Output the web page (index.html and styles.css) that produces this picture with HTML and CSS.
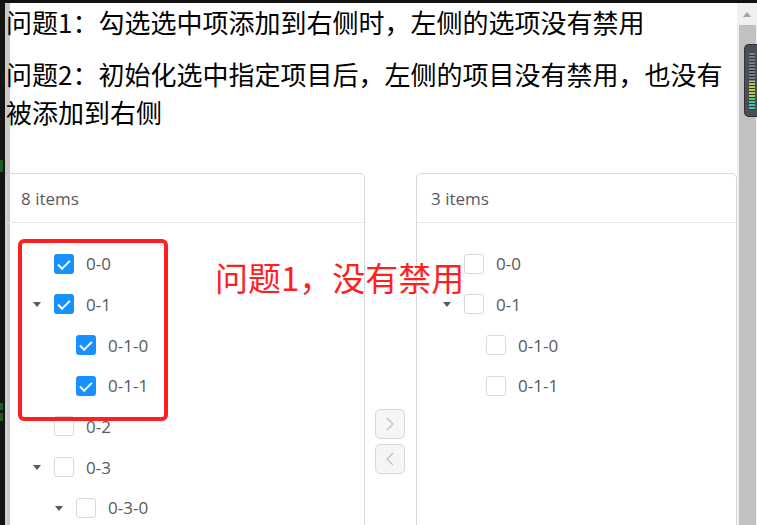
FILE: index.html
```html
<!DOCTYPE html>
<html lang="zh-CN">
<head>
  <meta charset="UTF-8" />
  <title>Transfer 问题</title>
  <link rel="stylesheet" href="styles.css">
</head>
<body>
  <div class="topbar"></div>
  <div class="window">
    <div class="edge"></div>

    <div class="page">
      <p class="question">问题1：勾选选中项添加到右侧时，左侧的选项没有禁用</p>
      <p class="question">问题2：初始化选中指定项目后，左侧的项目没有禁用，也没有被添加到右侧</p>

      <div class="transfer">
        <div class="list list-left">
          <div class="list-header">8 items</div>
          <div class="list-body">
            <div class="node"><span class="switcher"></span><span class="checkbox checked"></span><span class="title">0-0</span></div>
            <div class="node"><span class="switcher"><i class="caret"></i></span><span class="checkbox checked"></span><span class="title">0-1</span></div>
            <div class="node lvl-1"><span class="switcher"></span><span class="checkbox checked"></span><span class="title">0-1-0</span></div>
            <div class="node lvl-1"><span class="switcher"></span><span class="checkbox checked"></span><span class="title">0-1-1</span></div>
            <div class="node"><span class="switcher"></span><span class="checkbox"></span><span class="title">0-2</span></div>
            <div class="node"><span class="switcher"><i class="caret"></i></span><span class="checkbox"></span><span class="title">0-3</span></div>
            <div class="node lvl-1"><span class="switcher"><i class="caret"></i></span><span class="checkbox"></span><span class="title">0-3-0</span></div>
          </div>
        </div>

        <div class="operation">
          <button class="op-btn" disabled>
            <svg width="8" height="14" viewBox="0 0 8 14"><path d="M1 1 L7 7 L1 13" /></svg>
          </button>
          <button class="op-btn" disabled>
            <svg width="8" height="14" viewBox="0 0 8 14"><path d="M7 1 L1 7 L7 13" /></svg>
          </button>
        </div>

        <div class="list list-right">
          <div class="list-header">3 items</div>
          <div class="list-body">
            <div class="node"><span class="switcher"></span><span class="checkbox"></span><span class="title">0-0</span></div>
            <div class="node"><span class="switcher"><i class="caret"></i></span><span class="checkbox"></span><span class="title">0-1</span></div>
            <div class="node lvl-1"><span class="switcher"></span><span class="checkbox"></span><span class="title">0-1-0</span></div>
            <div class="node lvl-1"><span class="switcher"></span><span class="checkbox"></span><span class="title">0-1-1</span></div>
          </div>
        </div>
      </div>

      <!-- annotation drawn over the screenshot -->
      <div class="mark-box"></div>
      <div class="mark-text">问题1，没有禁用</div>
    </div>

    <div class="scrollbar">
      <div class="scroll-arrow"><i></i></div>
      <div class="scroll-track">
        <div class="meter"><div class="meter-ticks"></div></div>
      </div>
    </div>
  </div>
</body>
</html>
```

FILE: styles.css
```css
body {
  margin: 0;
  height: 100vh;
  overflow: hidden;
  display: flex;
  flex-direction: column;
  background: #111;
  font-family: "Noto Sans CJK SC", sans-serif;
}
.topbar {
  height: 3px;
  flex-shrink: 0;
  background: #111;
}
.window {
  flex: 1;
  display: flex;
  min-height: 0;
}
.edge {
  width: 5px;
  flex-shrink: 0;
  background:
    linear-gradient(to bottom,
      transparent 0 157px, #1d5a1d 157px 169px,
      transparent 169px 400px, #1d5a1d 400px 407px,
      transparent 407px 410px, #1d5a1d 410px 418px,
      transparent 418px) 0 0 / 3px 100% no-repeat,
    #141414;
}
.page {
  position: relative;
  flex: 1;
  min-width: 0;
  padding-left: 1px;
  background: linear-gradient(to right, #c9c9c9 0 5px, #fff 5px);
}
.question {
  margin: 0;
  font-size: 26px;
  line-height: 38px;
  color: #000;
}
.question + .question {
  margin-top: 14px;
}

/* transfer */
.transfer {
  display: flex;
  align-items: center;
  margin-top: 42px;
  font-family: "Open Sans", "Noto Sans CJK SC", sans-serif;
  font-size: 17px;
  color: #595959;
}
.list {
  box-sizing: border-box;
  height: 536px;
  flex-shrink: 0;
  border: 1px solid #d9d9d9;
  border-radius: 5px;
  display: flex;
  flex-direction: column;
}
.list-left {
  width: 359px;
}
.list-right {
  width: 321px;
}
.list-header {
  box-sizing: border-box;
  height: 49px;
  flex-shrink: 0;
  padding: 0 14px;
  display: flex;
  align-items: center;
  border-bottom: 1px solid #e8e8e8;
}
.list-body {
  padding-top: 20.5px;
}
.node {
  height: 40.67px;
  display: flex;
  align-items: center;
  padding-left: 21px;
}
.node.lvl-1 {
  padding-left: 43px;
}
.switcher {
  width: 17px;
  display: flex;
  justify-content: center;
}
.caret {
  width: 0;
  height: 0;
  border-left: 4.5px solid transparent;
  border-right: 4.5px solid transparent;
  border-top: 5px solid #595959;
  margin-top: 1px;
}
.checkbox {
  position: relative;
  box-sizing: border-box;
  width: 20px;
  height: 20px;
  margin-left: 9px;
  border: 1px solid #d9d9d9;
  border-radius: 2.5px;
  background: #fff;
}
.checkbox.checked {
  background: #1890ff;
  border-color: #1890ff;
}
.checkbox.checked::after {
  content: "";
  position: absolute;
  top: 50%;
  left: 22%;
  box-sizing: border-box;
  width: 7px;
  height: 11.5px;
  border: 2.5px solid #fff;
  border-top: 0;
  border-left: 0;
  transform: rotate(45deg) translate(-50%, -50%);
}
.title {
  margin-left: 12px;
}

.operation {
  display: flex;
  flex-direction: column;
  gap: 5px;
  margin: 0 11px 0 10px;
}
.op-btn {
  box-sizing: border-box;
  width: 30px;
  height: 30px;
  padding: 0;
  border: 1px solid #d9d9d9;
  border-radius: 5px;
  background: #f5f5f5;
  display: flex;
  align-items: center;
  justify-content: center;
}
.op-btn path {
  fill: none;
  stroke: #bfbfbf;
  stroke-width: 1.3;
}

/* red annotation */
.mark-box {
  position: absolute;
  left: 13px;
  top: 236px;
  box-sizing: border-box;
  width: 150px;
  height: 182px;
  border: 4px solid #ff1f1f;
  border-radius: 6px;
}
.mark-text {
  position: absolute;
  left: 210px;
  top: 258px;
  font-size: 33px;
  line-height: 33px;
  color: #ff1f1f;
  white-space: nowrap;
}

/* fake scrollbar with meter widget */
.scrollbar {
  width: 20px;
  flex-shrink: 0;
  display: flex;
  flex-direction: column;
  background: #f0f0f0;
}
.scroll-arrow {
  height: 22px;
  display: flex;
  align-items: center;
  justify-content: center;
}
.scroll-arrow i {
  width: 0;
  height: 0;
  border-left: 4px solid transparent;
  border-right: 4px solid transparent;
  border-bottom: 5px solid #a3a3a3;
}
.scroll-track {
  flex: 1;
  margin-left: 2px;
  margin-right: 1px;
  padding-top: 19px;
  background: #c1c1c1;
}
.meter {
  box-sizing: border-box;
  width: 14px;
  height: 73px;
  margin-left: 5px;
  padding: 8px 0 0 4px;
  background: #4a4e57;
  border: 1px solid #2f3239;
  border-right: 0;
  border-radius: 5px 0 0 5px;
}
.meter-ticks {
  width: 6px;
  height: 57px;
  background:
    repeating-linear-gradient(to bottom, transparent 0 2px, rgba(40, 42, 48, 0.9) 2px 3px),
    linear-gradient(to bottom, #7a7e86 0 28px, #b9c94e 28px 44px, #47c8a5 44px);
}
```
